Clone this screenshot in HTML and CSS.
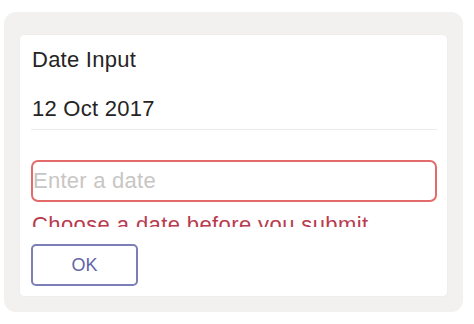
FILE: index.html
```html
<!DOCTYPE html>
<html>
<head>
<meta charset="utf-8">
<link rel="stylesheet" href="styles.css">
</head>
<body>
<div class="frame">
  <div class="card">
    <div class="title">Date Input</div>
    <div class="date">12 Oct 2017</div>
    <div class="field">Enter a date</div>
    <div class="error">Choose a date before you submit</div>
    <div class="actions"><button class="ok">OK</button></div>
  </div>
</div>
</body>
</html>
```
FILE: styles.css
```css
html, body {
  margin: 0;
  padding: 0;
  background: #ffffff;
}
body {
  font-family: "Liberation Sans", Arial, sans-serif;
  color: #252424;
}
.frame {
  box-sizing: border-box;
  width: 459px;
  height: 300px;
  margin: 12px 0 0 4px;
  padding: 23px 16px 16px 16px;
  background: #f2f1f0;
  border-radius: 12px;
}
.card {
  box-sizing: border-box;
  height: 261px;
  background: #ffffff;
  border-radius: 4px;
  box-shadow: 0 0 1px rgba(0, 0, 0, 0.12);
  padding: 12px 10px 10px 11px;
  display: flex;
  flex-direction: column;
}
.title, .date, .field, .error {
  font-size: 22px;
  line-height: 26px;
  letter-spacing: 0.25px;
}
.title {
  padding-left: 1px;
}
.date {
  margin-top: 23px;
  padding: 0 0 7px 1px;
  border-bottom: 1px solid #ececec;
}
.field {
  box-sizing: border-box;
  margin-top: 30px;
  height: 42px;
  border: 2px solid #e36b6b;
  border-radius: 7px;
  color: #c8c6c4;
  padding: 6px 0 0 0;
}
.error {
  margin-top: 10px;
  height: 15px;
  overflow: hidden;
  color: #b83c50;
  padding-left: 1px;
  letter-spacing: 0.4px;
}
.actions {
  margin-top: 17px;
  display: flex;
}
.ok {
  box-sizing: border-box;
  width: 107px;
  height: 42px;
  background: #ffffff;
  border: 2px solid #7c7eb8;
  border-radius: 5px;
  color: #6264a7;
  font-family: "Liberation Sans", Arial, sans-serif;
  font-size: 18px;
  padding: 0;
}
```
